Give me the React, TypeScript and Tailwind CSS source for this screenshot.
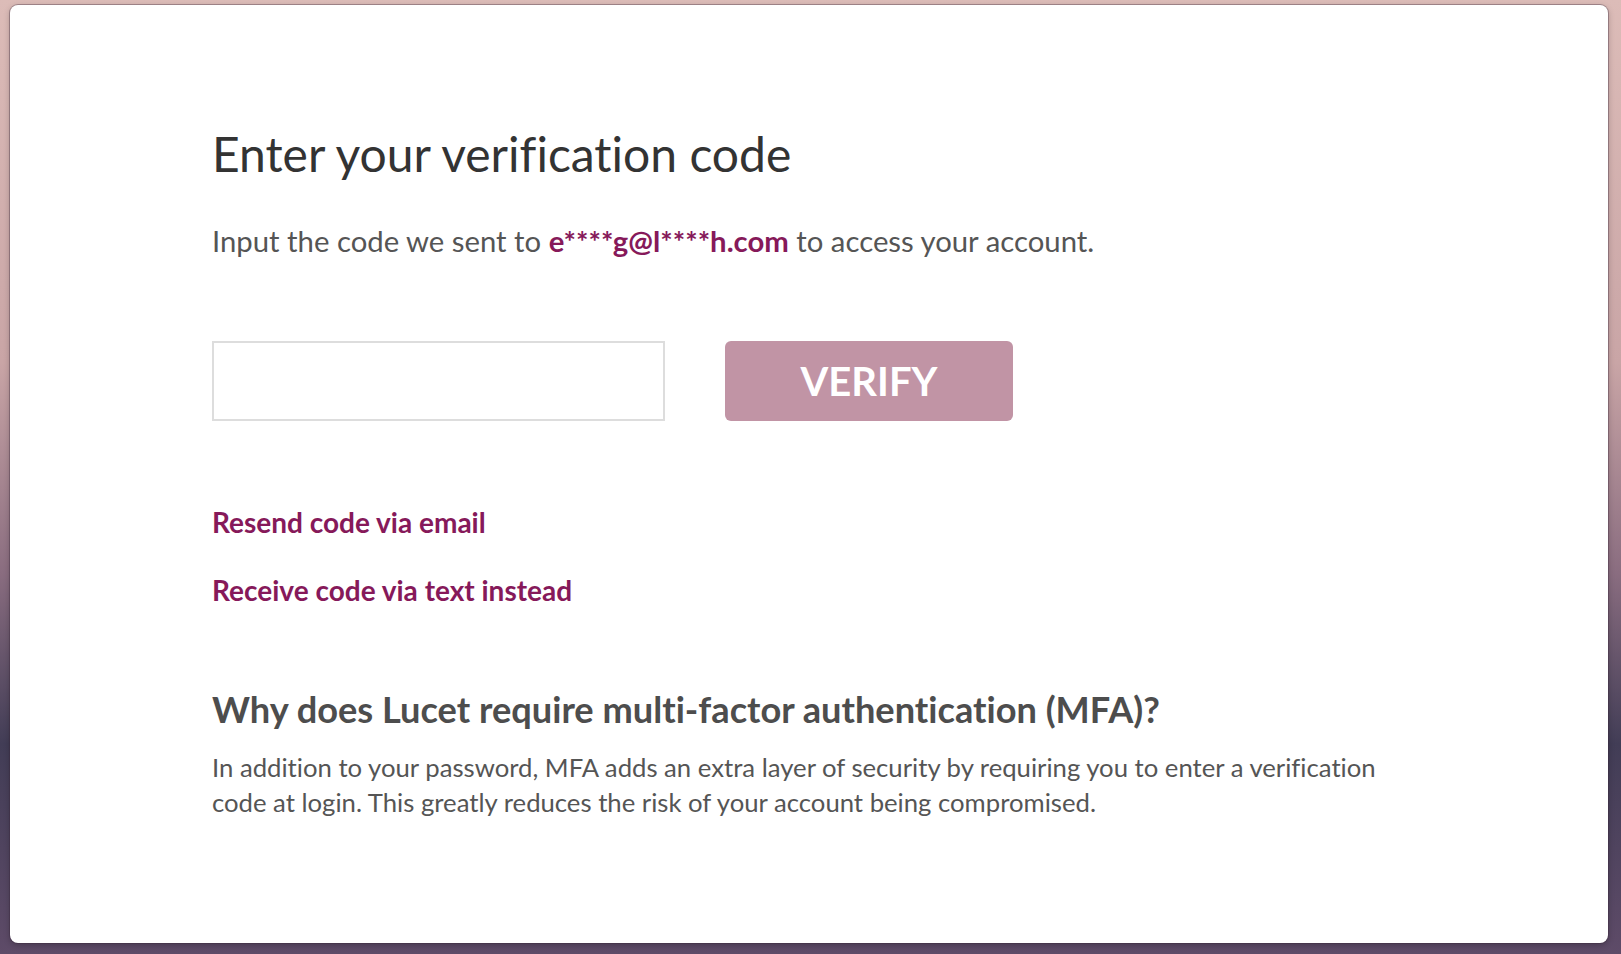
import React, { useState } from 'react';

export default function App() {
  const [code, setCode] = useState('');

  return (
    <div className="h-[954px] w-full overflow-hidden bg-[linear-gradient(180deg,#dcbcb8_0%,#c9a5a6_38%,#8a6d80_60%,#423d56_78%,#5e4b68_100%)] pt-[5px] pl-[10px] pr-[13px] pb-[11px] font-[Lato,sans-serif] [font-variant-ligatures:none]">
      <div className="h-[938px] rounded-lg bg-white pl-[202px] pt-[120px] shadow-[0_0_0_1px_rgba(60,40,60,0.35),0_2px_6px_rgba(0,0,0,0.25)]">
        <h1 className="text-[48px] font-normal leading-[1.2] text-[#333333]">Enter your verification code</h1>

        <p className="mt-[40px] text-[29.3px] leading-[1.2] text-[#555555]">
          Input the code we sent to <span className="font-bold text-[#86195a]">e****g@l****h.com</span> to access your account.
        </p>

        <div className="mt-[83px] flex items-center gap-[60px]">
          <input
            type="text"
            value={code}
            onChange={(e) => setCode(e.target.value)}
            className="h-[80px] w-[453px] border-2 border-[#dddddd] bg-white px-4 text-[28px] text-[#333] outline-none"
          />
          <button className="h-[80px] w-[288px] rounded-[6px] bg-[#c194a5] text-[40px] font-bold leading-none text-white">
            VERIFY
          </button>
        </div>

        <div className="mt-[85px] flex flex-col items-start gap-[35px]">
          <a href="#" className="text-[28px] font-bold leading-[1.2] text-[#86195a]">Resend code via email</a>
          <a href="#" className="text-[28px] font-bold leading-[1.2] text-[#86195a]">Receive code via text instead</a>
        </div>

        <h2 className="mt-[80px] text-[36.2px] font-bold leading-[1.2] text-[#4d4d4d]">
          Why does Lucet require multi-factor authentication (MFA)?
        </h2>
        <p className="mt-[19px] max-w-[1200px] text-[25.7px] leading-[35px] text-[#555555]">
          In addition to your password, MFA adds an extra layer of security by requiring you to enter a verification code at login. This greatly reduces the risk of your account being compromised.
        </p>
      </div>
    </div>
  );
}
